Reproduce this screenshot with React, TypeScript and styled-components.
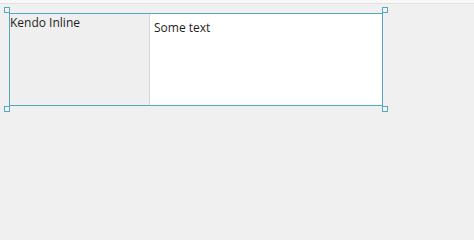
import React from 'react'
import styled, { createGlobalStyle } from 'styled-components'

const GlobalStyle = createGlobalStyle`
  html, body {
    margin: 0;
    padding: 0;
    background: #f0f0f0;
  }
  body {
    width: 474px;
    height: 214px;
    overflow: hidden;
    font-family: "Open Sans", "Noto Sans", sans-serif;
    font-size: 12px;
    color: #1e1e1e;
  }
`

const TopStrip = styled.div`
  height: 3px;
  background: #f8f8f8;
  border-bottom: 1px solid #e2e2e2;
`

const Canvas = styled.div`
  padding: 9px 0 0 9px;
`

const Frame = styled.div`
  position: relative;
  display: flex;
  width: 372px;
  height: 91px;
  border: 1px solid #55a8c2;
`

const Handle = styled.span<{ $v: 'top' | 'bottom'; $h: 'left' | 'right' }>`
  position: absolute;
  ${(p) => p.$v}: -7px;
  ${(p) => p.$h}: -6px;
  width: 4px;
  height: 4px;
  border: 1px solid #55a8c2;
  background: #f4f4f4;
`

const LabelCell = styled.div`
  width: 139px;
  background: #efefef;
  border-right: 1px solid #d6d6d6;
  padding: 1px 0 0 0;
  line-height: 16px;
`

const ValueCell = styled.div`
  flex: 1;
  background: #ffffff;
  padding: 6px 0 0 4px;
  line-height: 16px;
`

export default function App() {
  return (
    <>
      <GlobalStyle />
      <TopStrip />
      <Canvas>
        <Frame>
          <Handle $v="top" $h="left" />
          <Handle $v="top" $h="right" />
          <Handle $v="bottom" $h="left" />
          <Handle $v="bottom" $h="right" />
          <LabelCell>Kendo Inline</LabelCell>
          <ValueCell>Some text</ValueCell>
        </Frame>
      </Canvas>
    </>
  )
}
